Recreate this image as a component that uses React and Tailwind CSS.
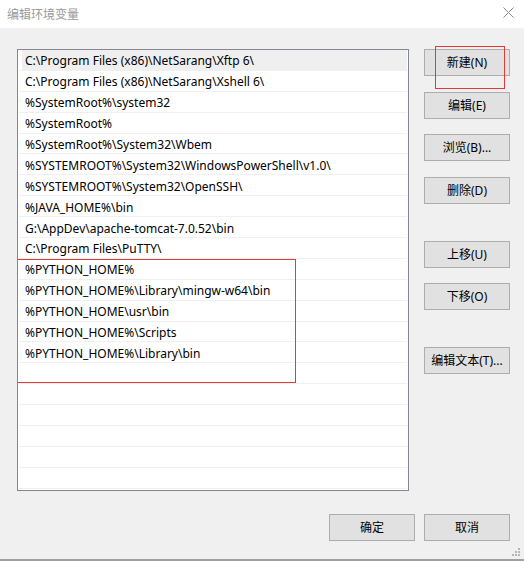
import React from 'react';

const paths = [
  'C:\\Program Files (x86)\\NetSarang\\Xftp 6\\',
  'C:\\Program Files (x86)\\NetSarang\\Xshell 6\\',
  '%SystemRoot%\\system32',
  '%SystemRoot%',
  '%SystemRoot%\\System32\\Wbem',
  '%SYSTEMROOT%\\System32\\WindowsPowerShell\\v1.0\\',
  '%SYSTEMROOT%\\System32\\OpenSSH\\',
  '%JAVA_HOME%\\bin',
  'G:\\AppDev\\apache-tomcat-7.0.52\\bin',
  'C:\\Program Files\\PuTTY\\',
  '%PYTHON_HOME%',
  '%PYTHON_HOME%\\Library\\mingw-w64\\bin',
  '%PYTHON_HOME\\usr\\bin',
  '%PYTHON_HOME%\\Scripts',
  '%PYTHON_HOME%\\Library\\bin',
  '', '', '', '', '', '',
];

const font = { fontFamily: '"Noto Sans", "Noto Sans CJK SC", sans-serif' };

const Btn = ({ children, className = '' }) => (
  <div className={`w-[86px] h-[27px] bg-[#e1e1e1] border border-[#adadad] flex items-center justify-center pt-[1px] text-[12px] text-black ${className}`}>
    {children}
  </div>
);

export default function App() {
  return (
    <div className="w-[524px] h-[561px] bg-white flex flex-col overflow-hidden" style={font}>
      <div className="h-[28px] bg-white flex items-center justify-between pl-[7px] pr-[10px] shrink-0">
        <span className="text-[12px] text-[#9a9a9a] pt-[1px]">编辑环境变量</span>
        <svg width="11" height="11" viewBox="0 0 11 11" className="mt-[-3px]">
          <path d="M0.5 0.5 L10.5 10.5 M10.5 0.5 L0.5 10.5" stroke="#8a8a8a" strokeWidth="1" />
        </svg>
      </div>

      <div className="flex-1 bg-[#f0f0f0] border-b-2 border-[#a0a0a0] relative">
        <div className="flex pt-[21px] pl-[17px]">
          <div className="w-[392px] h-[442px] border border-[#828790] bg-white relative overflow-hidden">
            <div className="pl-[1px] pr-[1px]">
              {paths.map((p, i) => (
                <div key={i} className="h-[20.9px] border-b border-[#f0f0f0] flex items-center">
                  <div className={`h-full flex-1 flex items-center ml-[3px] pl-[3px] pt-[3px] text-[12px] text-black whitespace-nowrap ${i === 0 ? 'bg-[#efefef]' : ''}`}>
                    {p}
                  </div>
                </div>
              ))}
            </div>
            <div className="absolute left-[-1px] top-[209px] w-[279px] h-[124px] border border-[#e53935]" />
          </div>

          <div className="ml-[15px] flex flex-col relative">
            <Btn className="mt-[0px]">新建(N)</Btn>
            <Btn className="mt-[16px]">编辑(E)</Btn>
            <Btn className="mt-[15px]">浏览(B)...</Btn>
            <Btn className="mt-[16px]">删除(D)</Btn>
            <Btn className="mt-[37px]">上移(U)</Btn>
            <Btn className="mt-[15px]">下移(O)</Btn>
            <Btn className="mt-[37px]">编辑文本(T)...</Btn>
            <div className="absolute left-[11px] top-[-3px] w-[70px] h-[43px] border border-[#e53935]" />
          </div>
        </div>

        <div className="flex justify-end gap-[9px] pr-[14px] mt-[23px]">
          <Btn>确定</Btn>
          <Btn>取消</Btn>
        </div>

        <svg width="9" height="9" viewBox="0 0 9 9" className="absolute right-[3px] bottom-[2px]">
          <rect x="6" y="0" width="2" height="2" fill="#b5b5b5" />
          <rect x="3" y="3" width="2" height="2" fill="#b5b5b5" />
          <rect x="6" y="3" width="2" height="2" fill="#b5b5b5" />
          <rect x="0" y="6" width="2" height="2" fill="#b5b5b5" />
          <rect x="3" y="6" width="2" height="2" fill="#b5b5b5" />
          <rect x="6" y="6" width="2" height="2" fill="#b5b5b5" />
        </svg>
      </div>
    </div>
  );
}
